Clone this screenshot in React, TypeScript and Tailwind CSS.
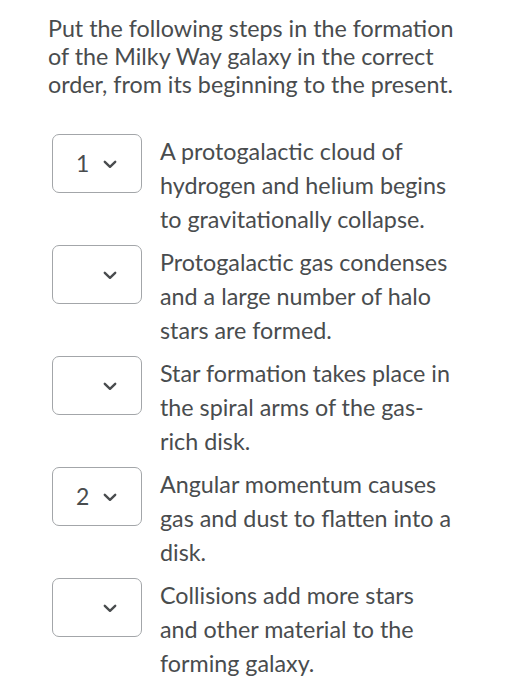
import React from 'react'

interface Step {
  value: string
  text: string
}

const steps: Step[] = [
  { value: '1', text: 'A protogalactic cloud of hydrogen and helium begins to gravitationally collapse.' },
  { value: '', text: 'Protogalactic gas condenses and a large number of halo stars are formed.' },
  { value: '', text: 'Star formation takes place in the spiral arms of the gas-rich disk.' },
  { value: '2', text: 'Angular momentum causes gas and dust to flatten into a disk.' },
  { value: '', text: 'Collisions add more stars and other material to the forming galaxy.' }
]

const Chevron = () => (
  <svg width="14" height="9" viewBox="0 0 14 9" fill="none" className="shrink-0">
    <path d="M1.8 1.8L7 6.8L12.2 1.8" stroke="#494c4e" strokeWidth="2.4" strokeLinecap="round" strokeLinejoin="round" />
  </svg>
)

const OrderSelect: React.FC<{ value: string }> = ({ value }) => (
  <div className="w-[90px] h-[59px] shrink-0 rounded-[7px] border border-[#a3a6a9] bg-white flex items-center">
    <span className="w-[23px] shrink-0" />
    <span className="w-[27px] text-[23px] leading-none text-[#494c4e]">{value}</span>
    <span className="mt-[1px]">
      <Chevron />
    </span>
  </div>
)

export default function App() {
  return (
    <div
      className="min-h-[700px] bg-white text-[#494c4e] pl-[48px] pt-[14px]"
      style={{ fontFamily: 'Lato, "Open Sans", sans-serif' }}
    >
      <p className="w-[412px] text-[23.3px] leading-[28px]">
        Put the following steps in the formation of the Milky Way galaxy in the correct order, from its beginning to the
        present.
      </p>
      <div className="mt-[36px] flex flex-col gap-[9px]">
        {steps.map((s, i) => (
          <div key={i} className="flex items-start">
            <div className="ml-[4px]">
              <OrderSelect value={s.value} />
            </div>
            <p className="ml-[18px] w-[293px] text-[23.3px] leading-[34px]">{s.text}</p>
          </div>
        ))}
      </div>
    </div>
  )
}
